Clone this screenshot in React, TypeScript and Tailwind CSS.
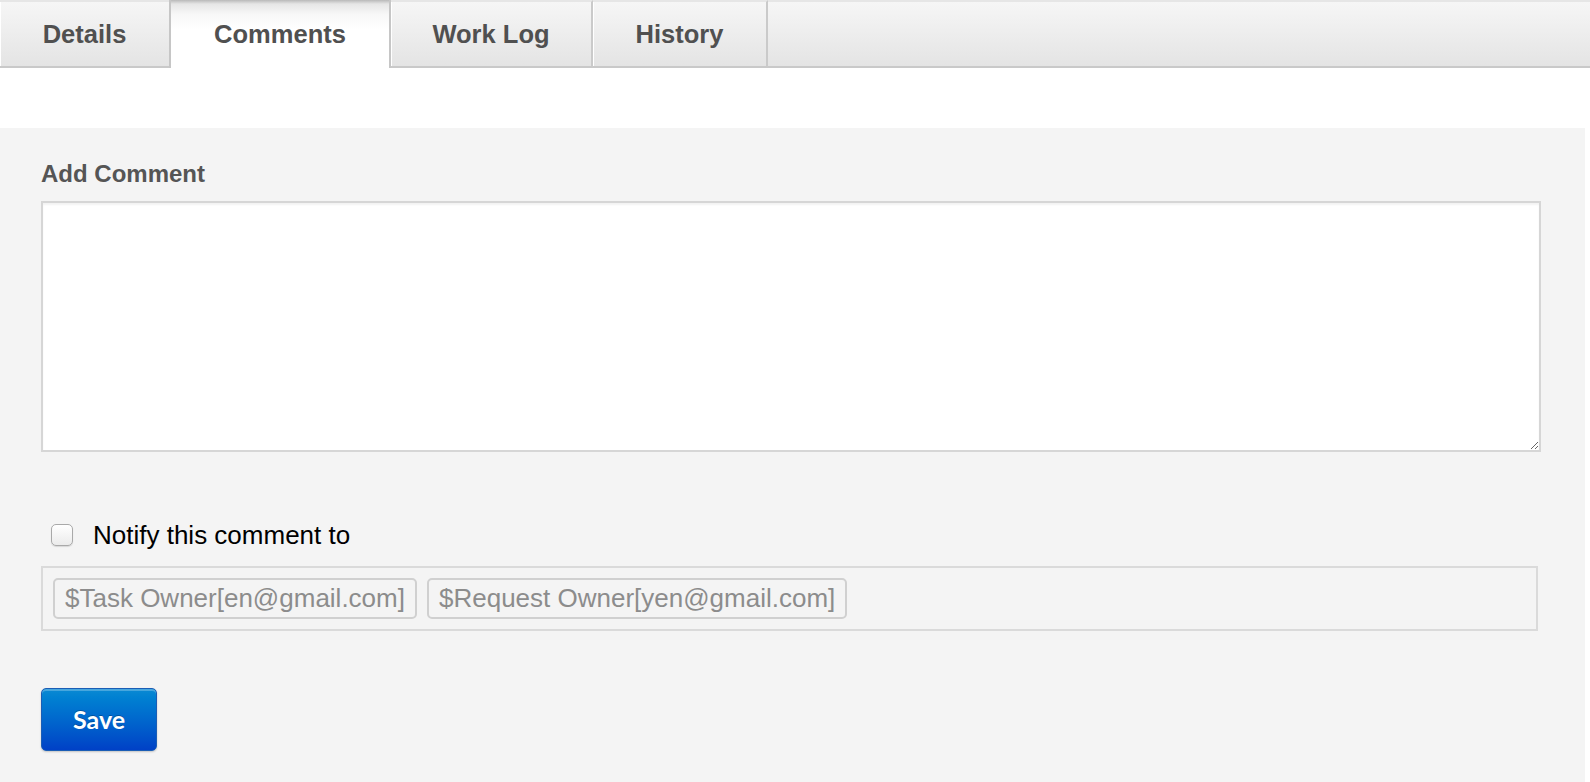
import { useState } from 'react'

const tabs = ['Details', 'Comments', 'Work Log', 'History']

export default function App() {
  const [active, setActive] = useState('Comments')
  const [notify, setNotify] = useState(false)

  return (
    <div className="min-h-screen w-full bg-white font-['Liberation_Sans',Arial,sans-serif]">
      {/* Tab bar */}
      <div className="flex h-[68px]">
        {tabs.map((t) => {
          const isActive = t === active
          const widths: Record<string, string> = {
            Details: 'w-[169px]',
            Comments: 'w-[222px]',
            'Work Log': 'w-[202px]',
            History: 'w-[175px]',
          }
          return (
            <button
              key={t}
              onClick={() => setActive(t)}
              className={
                isActive
                  ? `${widths[t]} flex items-center justify-center border-x-2 border-[#c6c6c6] bg-[linear-gradient(to_bottom,#b9b9b9_0px,#e6e6e6_4px,#f7f7f7_14px,#ffffff_30px)] text-[25.5px] font-bold text-[#505050]`
                  : `${widths[t]} flex items-center justify-center border-t-2 border-b-2 border-t-[#e6e6e6] border-b-[#c9c9c9] bg-gradient-to-b from-[#f6f6f6] to-[#e4e4e4] text-[25.5px] font-bold text-[#505050] shadow-[inset_1px_0_0_#ffffff] ${t === 'Details' ? '' : 'border-r-2 border-r-[#cacaca]'}`
              }
            >
              {t}
            </button>
          )
        })}
        <div className="flex-1 border-t-2 border-b-2 border-t-[#e6e6e6] border-b-[#c9c9c9] bg-gradient-to-b from-[#f6f6f6] to-[#e4e4e4]" />
      </div>

      {/* Comment panel */}
      <div className="mt-[60px] mr-[5px] bg-[#f4f4f4] pl-[41px] pt-[32px] pb-[32px]">
        <div className="text-[24px] leading-[28px] font-bold text-[#555555]">Add Comment</div>

        <textarea className="mt-[13px] block h-[251px] w-[1500px] resize border-2 border-[#d6d6d6] bg-white shadow-[inset_0_2px_2px_rgba(0,0,0,0.05)] outline-none" />

        <label className="mt-[68px] flex h-[30px] cursor-pointer items-center">
          <span
            onClick={() => setNotify(!notify)}
            className="ml-[10px] flex h-[22px] w-[22px] items-center justify-center rounded-[5px] border border-[#a9a9a9] bg-gradient-to-b from-white to-[#ebebeb] shadow-[0_1px_1px_rgba(0,0,0,0.12)]"
          >
            {notify && (
              <svg viewBox="0 0 16 16" className="h-4 w-4">
                <path d="M3 8.5l3 3 7-7" fill="none" stroke="#333" strokeWidth="2" />
              </svg>
            )}
          </span>
          <span className="ml-[20px] text-[26px] leading-[30px] text-black">Notify this comment to</span>
        </label>

        <div className="mt-[16px] flex h-[65px] w-[1497px] items-center gap-[10px] border-2 border-[#dadada] px-[10px]">
          <span className="flex h-[41px] items-center rounded-[5px] border-2 border-[#d0d0d0] px-[10px] text-[26px] text-[#8c8c8c]">
            $Task Owner[en@gmail.com]
          </span>
          <span className="flex h-[41px] items-center rounded-[5px] border-2 border-[#d0d0d0] px-[10px] text-[26px] text-[#8c8c8c]">
            $Request Owner[yen@gmail.com]
          </span>
        </div>

        <button className="mt-[57px] flex h-[63px] w-[116px] items-center justify-center rounded-[5px] border border-[#1a5db5] bg-gradient-to-b from-[#0b8ad3] to-[#0040c6] font-['Lato',sans-serif] text-[25px] font-bold text-white shadow-[inset_0_2px_0_rgba(255,255,255,0.25),0_1px_2px_rgba(0,0,0,0.2)] [text-shadow:0_-1px_0_rgba(0,0,0,0.25)]">
          Save
        </button>
      </div>
    </div>
  )
}
